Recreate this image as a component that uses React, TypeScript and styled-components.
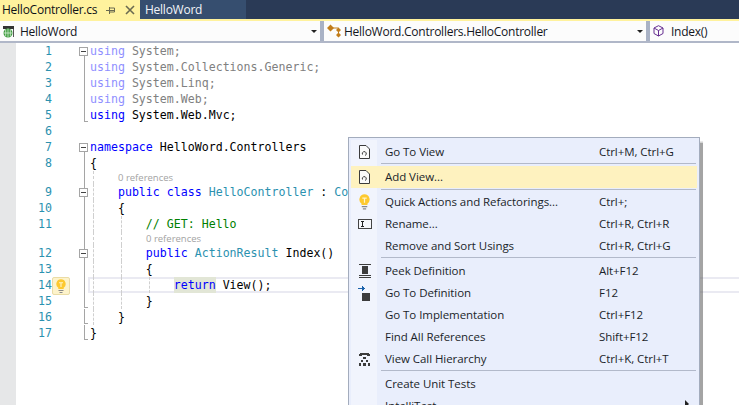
import React from "react";
import styled, { createGlobalStyle } from "styled-components";

const Global = createGlobalStyle`
  html, body { margin: 0; padding: 0; width: 739px; height: 405px; overflow: hidden; background: #fff; }
  #root { width: 739px; height: 405px; overflow: hidden; }
`;
const UI = `"Open Sans", "Noto Sans", sans-serif`;
const MONO = `"DejaVu Sans Mono", "Liberation Mono", monospace`;

const Page = styled.div`
  position: relative; width: 739px; height: 405px; overflow: hidden; background: #fff;
  display: flex; flex-direction: column;
`;
const TabBar = styled.div`
  height: 19px; background: #2a3a56; display: flex; border-bottom: 2px solid #fff29d; flex: none;
`;
const ActiveTab = styled.div`
  width: 140px; background: #fff29d; display: flex; align-items: center; color: #0e1016;
  font: 12px ${UI}; letter-spacing: -0.25px; padding-left: 2px; box-sizing: border-box;
`;
const TabName = styled.span` flex: 1; `;
const PinIcon = styled.svg` width: 10px; height: 10px; margin-right: 9px; flex: none; `;
const CloseIcon = styled.svg` width: 10px; height: 10px; margin-right: 5px; flex: none; `;
const Tab = styled.div`
  width: 106px; background: #364e6f; color: #f2f4f8; font: 12px ${UI}; letter-spacing: -0.25px;
  display: flex; align-items: center; padding-left: 5px; box-sizing: border-box;
`;
const NavBar = styled.div`
  height: 20px; display: flex; background: #a9b2c5; border-bottom: 2px solid #b0b7c8; flex: none; gap: 4px;
`;
const NavBox = styled.div<{ $w: number; $gap: number }>`
  width: ${p => p.$w}px; flex: none; background: #fcfcfc; display: flex; align-items: center; gap: ${p => p.$gap}px;
  padding: 0 3px; box-sizing: border-box; color: #14161c; font: 12px ${UI}; letter-spacing: -0.25px;
`;
const NavText = styled.span` flex: 1; white-space: nowrap; `;
const NavGlyph = styled.svg` flex: none; `;
const Caret = styled.span`
  width: 0; height: 0; border-left: 3px solid transparent; border-right: 3px solid transparent;
  border-top: 3px solid #222; flex: none;
`;
const Editor = styled.div`
  flex: 1; border-left: 16px solid #e6e7e8; display: flex; flex-direction: column; min-height: 0;
`;
const Row = styled.div<{ $lens?: boolean }>`
  display: grid; grid-template-columns: 35px 19px 9px 11px 1fr; height: ${p => (p.$lens ? 13 : 16)}px; flex: none;
`;
const LineNo = styled.div`
  font: 11.6px/16px ${MONO}; color: #2b91af; text-align: right; padding-right: 0; transform: translateX(1px);
`;
const Glyph = styled.div` display: flex; align-items: flex-start; justify-content: center; `;
const BulbBox = styled.div`
  width: 18px; height: 18px; background: #fdf3cb; border: 1px solid #eadca6; border-radius: 2px; box-sizing: border-box;
  display: flex; align-items: center; justify-content: center; flex: none; position: relative; z-index: 1;
`;
const Spacer = styled.div``;
const Fold = styled.div<{ $kind: string }>`
  position: relative;
  &::before {
    content: "";
    display: ${p => (p.$kind === "none" ? "none" : "block")};
    position: absolute; left: 5px; width: 1px; background: #a5a5a5;
    top: ${p => (p.$kind === "first" ? "8px" : "0")};
    bottom: ${p => (p.$kind === "end" ? "1px" : "0")};
  }
  &::after {
    content: "";
    display: ${p => (p.$kind === "end" ? "block" : "none")};
    position: absolute; left: 5px; width: 4px; height: 1px; bottom: 1px; background: #a5a5a5;
  }
`;
const FoldBox = styled.div`
  position: absolute; left: 0; top: 4px; width: 9px; height: 9px; box-sizing: border-box; z-index: 1;
  border: 1px solid #a5a5a5; background: #fff;
  &::after { content: ""; position: absolute; left: 1px; top: 3px; width: 5px; height: 1px; background: #444; }
`;
const Code = styled.div<{ $current?: boolean }>`
  position: relative; font: 11.6px/16px ${MONO}; white-space: pre; color: #000; height: 16px;
  ${p => p.$current && `margin-left: -2px; padding-left: 2px; box-shadow: inset 0 2px 0 #eaeaf2, inset 0 -2px 0 #eaeaf2, inset 2px 0 0 #eaeaf2;`}
`;
const Guide = styled.i<{ $x: number }>`
  position: absolute; top: 0; bottom: 0; left: ${p => p.$x}px; width: 0; border-left: 1px dashed #cfcfcf;
`;
const Lens = styled.div<{ $x: number }>`
  position: relative; font: 9.5px/13px ${UI}; color: #a3a3a3; padding-left: ${p => p.$x}px; white-space: pre;
`;
const K = styled.span` color: #0000ff; `;
const T = styled.span` color: #2b91af; `;
const C = styled.span` color: #008000; `;
const FK = styled.span` color: #8f8fff; `;
const FG = styled.span` color: #808080; `;
const Hit = styled.span` background: #e2e6d6; display: inline-block; height: 16px; `;

const Menu = styled.div`
  position: absolute; left: 348px; top: 137px; width: 352px; height: 290px; box-sizing: border-box;
  background: #e9eefc; border: 1px solid #a3acbd; box-shadow: 3px 3px 1px -0.5px rgba(90,90,90,.55);
  padding: 3px 1px; display: flex; flex-direction: column; z-index: 5;
  &::before { content: ""; position: absolute; left: 2px; top: 2px; bottom: 0; width: 26px; background: #f1f4fd; }
`;
const Item = styled.div<{ $hot?: boolean }>`
  position: relative; height: 22px; flex: none; display: grid; grid-template-columns: 34px 214px 1fr; align-items: center;
  color: #1b1f2a; font: 11.5px ${UI}; letter-spacing: -0.06px; white-space: nowrap; margin: 0 0 0 1px;
  ${p => p.$hot && `background: #fef2bf; margin-right: 1px;`}
`;
const ItemLabel = styled.span` display: block; padding-bottom: 2px; `;
const ItemIcon = styled.div` display: flex; justify-content: center; width: 27px; `;
const Sep = styled.div<{ $drop?: boolean }>`
  position: relative; height: 3px; flex: none; margin: 0 2px 0 31px;
  &::after { content: ""; position: absolute; left: 0; right: 0; top: ${p => (p.$drop ? 1 : 0)}px; height: 1px; background: #b2b9ca; }
`;
const SubArrow = styled.span`
  position: absolute; left: 334px; top: 5px; width: 0; height: 0;
  border-left: 4px solid #222; border-top: 4px solid transparent; border-bottom: 4px solid transparent;
`;

const DocIcon = () => (
  <svg width="11" height="14" viewBox="0 0 11 14">
    <path d="M.5.5h6.500l3.500 3.500v9.500H.5z" fill="#fafafa" stroke="#3c3c3c" />
    <path d="M3.500 9.500A2 2 0 1 1 6 10.500" fill="none" stroke="#3c3c3c" />
  </svg>
);
const Bulb = ({ s = 11 }: { s?: number }) => (
  <svg width={s} height={s * 1.4} viewBox="0 0 10 14">
    <path d="M5 .3a4.700 4.700 0 0 0-2.700 8.500V10h5.400V8.800A4.700 4.700 0 0 0 5 .3z" fill="#fdc92f" />
    <path d="M3 3.800h4M5 3.800V8" fill="none" stroke="#fff4c8" strokeWidth="1.100" />
    <path d="M2.500 11.500h5M3.500 13.500h3" stroke="#8a8a8a" />
  </svg>
);
const RenameIcon = () => (
  <svg width="14" height="10" viewBox="0 0 14 10" shapeRendering="crispEdges">
    <rect x=".5" y=".5" width="13" height="9" fill="#f6f7fb" stroke="#444" />
    <path d="M3 2h3v1H3zM3 7h3v1H3zM4 3h1v4H4z" fill="#222" />
  </svg>
);
const PeekIcon = () => (
  <svg width="12" height="14" viewBox="0 0 12 14" shapeRendering="crispEdges">
    <path d="M0 0h12v1H0zM0 11h12v1H0zM0 13h12v1H0z" fill="#3c3c3c" />
    <path d="M3 2h6v8H3z" fill="#3c3c3c" />
  </svg>
);
const GotoIcon = () => (
  <svg width="13" height="15" viewBox="0 0 13 15" shapeRendering="crispEdges">
    <path d="M4 7h8v8H4z" fill="#3c3c3c" />
    <path d="M0 2h4V0h1v1h1v1h1v1H6v1H5v1H4V3H0z" fill="#1b62ab" />
  </svg>
);
const HierIcon = () => (
  <svg width="11" height="13" viewBox="0 0 11 13" shapeRendering="crispEdges">
    <path d="M1 0h9v1h1v2H8V2H3v1H0V1h1z" fill="#3c3c3c" />
    <path d="M4 4h3v2H4zM2 7h2v2H2zM7 7h2v2H7zM0 10h2v3H0zM4 10h3v3H4zM9 10h2v3H9z" fill="#3c3c3c" />
  </svg>
);

type L = { n: number; fold: string; box?: boolean; guides?: number[]; lens?: number; cur?: boolean; c: React.ReactNode };
const lines: L[] = [
  { n: 1, fold: "first", box: true, c: <><FK>using</FK> <FG>System;</FG></> },
  { n: 2, fold: "line", c: <><FK>using</FK> <FG>System.Collections.Generic;</FG></> },
  { n: 3, fold: "line", c: <><FK>using</FK> <FG>System.Linq;</FG></> },
  { n: 4, fold: "line", c: <><FK>using</FK> <FG>System.Web;</FG></> },
  { n: 5, fold: "end", c: <><K>using</K> System.Web.Mvc;</> },
  { n: 6, fold: "none", c: "" },
  { n: 7, fold: "first", box: true, c: <><K>namespace</K> HelloWord.Controllers</> },
  { n: 8, fold: "line", c: "{" },
  { n: 9, fold: "line", box: true, lens: 28, guides: [3], c: <>    <K>public</K> <K>class</K> <T>HelloController</T> : <T>Controller</T></> },
  { n: 10, fold: "line", guides: [3], c: "    {" },
  { n: 11, fold: "line", guides: [3, 31], c: <>        <C>// GET: Hello</C></> },
  { n: 12, fold: "line", box: true, lens: 56, guides: [3, 31], c: <>        <K>public</K> <T>ActionResult</T> Index()</> },
  { n: 13, fold: "line", guides: [3, 31], c: "        {" },
  { n: 14, fold: "line", cur: true, guides: [3, 31, 59], c: <>            <Hit><K>return</K></Hit> View();</> },
  { n: 15, fold: "end", guides: [3, 31], c: "        }" },
  { n: 16, fold: "end", guides: [3], c: "    }" },
  { n: 17, fold: "end", c: "}" },
];

type MI = { t: string; k?: string; i?: React.ReactNode; hot?: boolean; sep?: boolean; sub?: boolean };
const items: MI[] = [
  { t: "Go To View", k: "Ctrl+M, Ctrl+G", i: <DocIcon />, sep: true },
  { t: "Add View...", i: <DocIcon />, hot: true, sep: true },
  { t: "Quick Actions and Refactorings...", k: "Ctrl+;", i: <Bulb /> },
  { t: "Rename...", k: "Ctrl+R, Ctrl+R", i: <RenameIcon /> },
  { t: "Remove and Sort Usings", k: "Ctrl+R, Ctrl+G", sep: true },
  { t: "Peek Definition", k: "Alt+F12", i: <PeekIcon /> },
  { t: "Go To Definition", k: "F12", i: <GotoIcon /> },
  { t: "Go To Implementation", k: "Ctrl+F12" },
  { t: "Find All References", k: "Shift+F12" },
  { t: "View Call Hierarchy", k: "Ctrl+K, Ctrl+T", i: <HierIcon />, sep: true },
  { t: "Create Unit Tests" },
  { t: "IntelliTest", sub: true },
];

export default function App() {
  return (
    <Page>
      <Global />
      <TabBar>
        <ActiveTab>
          <TabName>HelloController.cs</TabName>
          <PinIcon viewBox="0 0 10 10"><path d="M0 5.500h3M3.500 2v7M3.500 3h5v4h-5M3.500 5.500h5" fill="none" stroke="#6a6a50" /></PinIcon>
          <CloseIcon viewBox="0 0 10 10"><path d="M1 1l8 8M9 1l-8 8" stroke="#6a6a50" strokeWidth="1.600" /></CloseIcon>
        </ActiveTab>
        <Tab>HelloWord</Tab>
      </TabBar>
      <NavBar>
        <NavBox $w={320} $gap={4}>
          <NavGlyph width="13" height="13" viewBox="0 0 13 13">
            <path d="M0 1h11v3H0z" fill="#333" /><path d="M10 4h1v8h-1z" fill="#555" />
            <circle cx="5" cy="8" r="4.500" fill="#3c9a3c" />
            <path d="M.5 8h9M5 3.500v9M2.700 4.500v7M7.300 4.500v7" stroke="#d8efd8" strokeWidth=".8" />
          </NavGlyph>
          <NavText>HelloWord</NavText><Caret />
        </NavBox>
        <NavBox $w={322} $gap={2}>
          <NavGlyph width="15" height="14" viewBox="0 0 15 14">
            <path d="M0 4l3.500-3.500L7 4 3.500 7.500zM9 6l2.500-2.500L14 6l-2.500 2.500zM9 11l2.500-2.500L14 11l-2.500 2.500z" fill="#c27d1a" />
            <path d="M3.500 4h8v7" fill="none" stroke="#c27d1a" />
          </NavGlyph>
          <NavText>HelloWord.Controllers.HelloController</NavText><Caret />
        </NavBox>
        <NavBox $w={89} $gap={7}>
          <NavGlyph width="11" height="12" viewBox="0 0 11 12">
            <path d="M5.500.7 10 3v5.500L5.500 11 1 8.500V3zM1 3l4.500 2.500L10 3M5.500 5.500V11" fill="none" stroke="#652d90" />
          </NavGlyph>
          <NavText>Index()</NavText>
        </NavBox>
      </NavBar>
      <Editor>
        {lines.map(l => (
          <React.Fragment key={l.n}>
            {l.lens !== undefined && (
              <Row $lens>
                <Spacer /><Spacer /><Spacer />
                <Fold $kind="line" />
                <Lens $x={l.lens}>
                  <Guide $x={3} />
                  {l.lens > 28 && <Guide $x={31} />}
                  0 references
                </Lens>
              </Row>
            )}
            <Row>
              <LineNo>{l.n}</LineNo>
              <Glyph>{l.cur && <BulbBox><Bulb s={10} /></BulbBox>}</Glyph>
              <Spacer />
              <Fold $kind={l.fold}>{l.box && <FoldBox />}</Fold>
              <Code $current={l.cur}>
                {(l.guides || []).map(g => <Guide key={g} $x={g + (l.cur ? 2 : 0)} />)}
                {l.c}
              </Code>
            </Row>
          </React.Fragment>
        ))}
      </Editor>
      <Menu>
        {items.map(m => (
          <React.Fragment key={m.t}>
            <Item $hot={m.hot}>
              <ItemIcon>{m.i}</ItemIcon>
              <ItemLabel>{m.t}</ItemLabel>
              <ItemLabel>{m.k}</ItemLabel>
              {m.sub && <SubArrow />}
            </Item>
            {m.sep && <Sep $drop={m.hot} />}
          </React.Fragment>
        ))}
      </Menu>
    </Page>
  );
}
